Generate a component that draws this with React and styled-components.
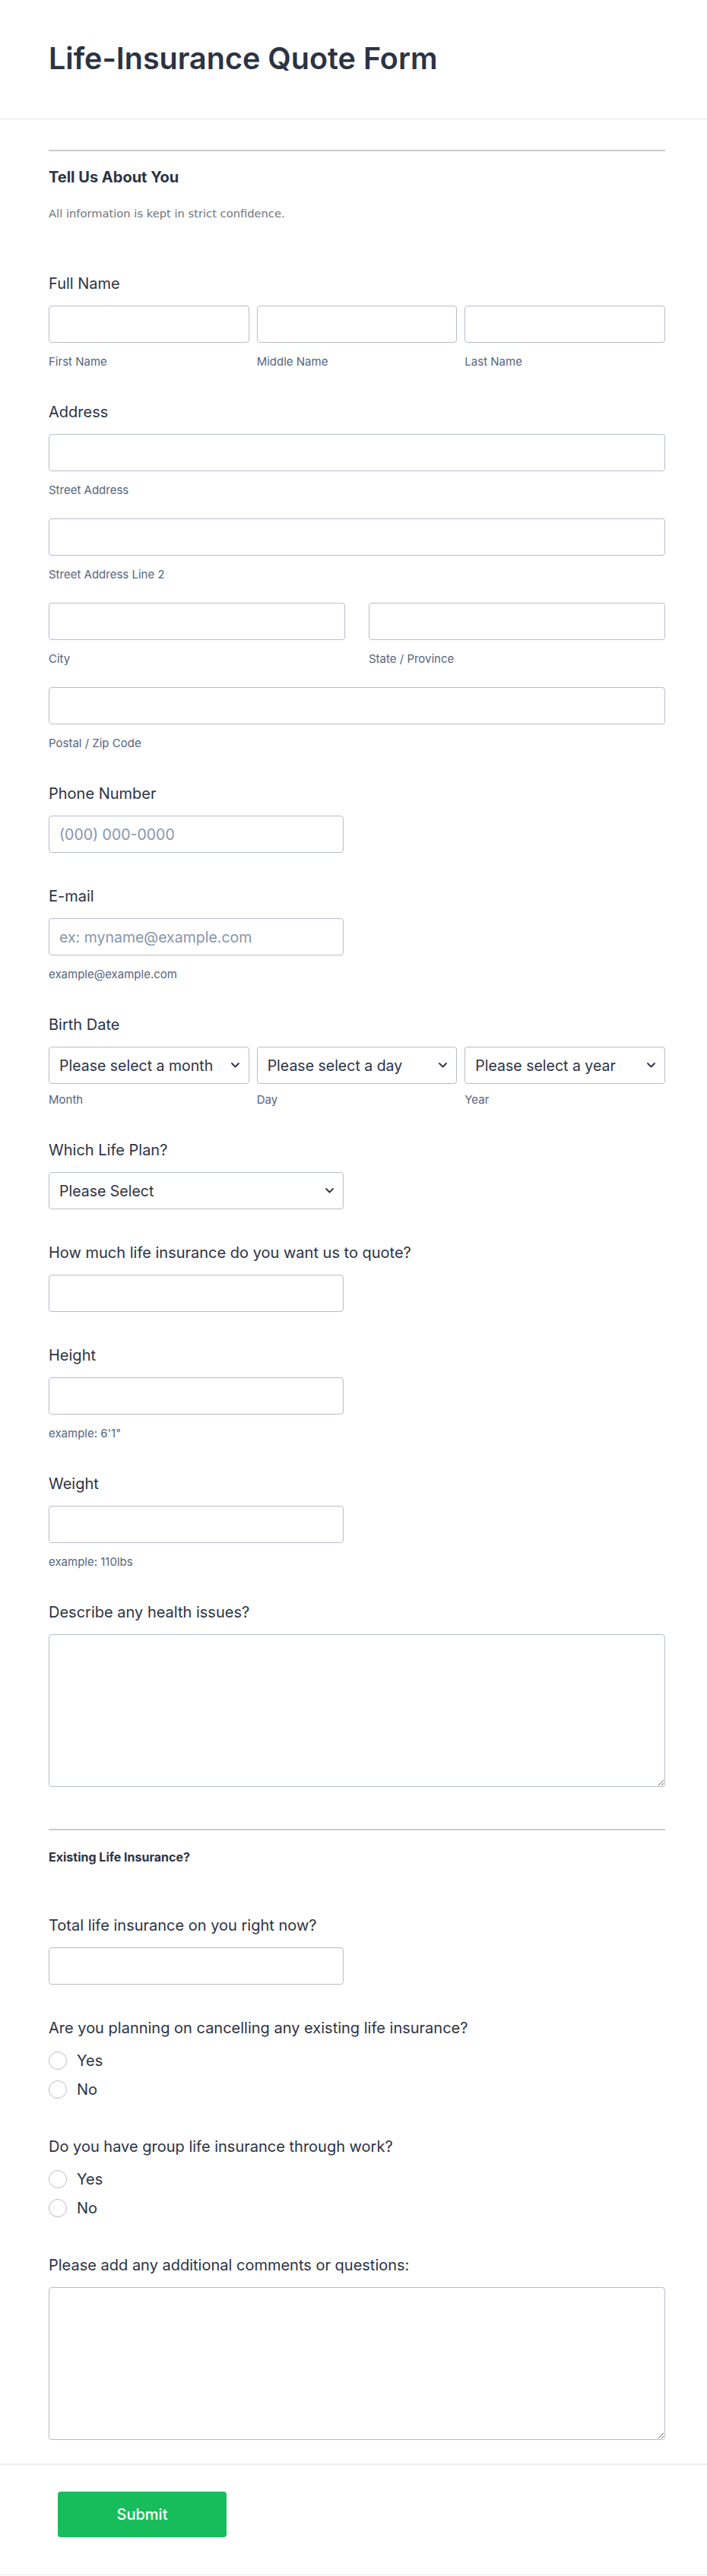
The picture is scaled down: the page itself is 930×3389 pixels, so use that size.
import React from 'react';
import styled, { createGlobalStyle } from 'styled-components';

const GlobalStyle = createGlobalStyle`
  html, body { margin: 0; padding: 0; background: #ffffff; }
  body { font-family: Inter, "Noto Sans", sans-serif; color: #2c3345; }
  *, *::before, *::after { box-sizing: border-box; }
  input::placeholder, textarea::placeholder { color: #8894ab; opacity: 1; }
`;

const Page = styled.div`
  width: 930px;
  display: flex;
  flex-direction: column;
  background: #ffffff;
`;

const Header = styled.header`
  padding: 55px 55px 57px 64px;
  border-bottom: 1px solid #e3e5ea;
`;

const Title = styled.h1`
  margin: 0;
  font-size: 39.5px;
  line-height: 44px;
  font-weight: 600;
  color: #2c3345;
`;

const Main = styled.main`
  padding: 40px 55px 31px 64px;
  display: flex;
  flex-direction: column;
  gap: 55px;
`;

const Section = styled.section`
  display: flex;
  flex-direction: column;
  gap: 45px;
`;

const SectionHead = styled.div`
  border-top: 2px solid #c9cbcf;
  padding-bottom: ${(p) => p.$pb}px;
`;

const SectionTitle = styled.h2`
  margin: ${(p) => (p.$small ? 24 : 22)}px 0 0;
  font-size: ${(p) => (p.$small ? 16 : 20)}px;
  line-height: ${(p) => (p.$small ? 22 : 24)}px;
  font-weight: 700;
  color: #2c3345;
`;

const SectionSub = styled.p`
  margin: 27px 0 0;
  font-family: "DejaVu Sans", "Noto Sans", sans-serif;
  font-size: 14.7px;
  line-height: 18px;
  color: #6f7380;
`;

const Field = styled.div`
  display: flex;
  flex-direction: column;
  padding-bottom: ${(p) => p.$pb || 0}px;
`;

const Label = styled.label`
  font-size: 20px;
  line-height: 24px;
  font-weight: 400;
  color: #2c3345;
  margin-bottom: ${(p) => p.$mb || 17}px;
`;

const Row = styled.div`
  display: grid;
  grid-template-columns: ${(p) => p.$cols};
  column-gap: ${(p) => p.$gap}px;
`;

const Stack = styled.div`
  display: flex;
  flex-direction: column;
  gap: 28px;
`;

const Sub = styled.div`
  display: flex;
  flex-direction: column;
  min-width: 0;
`;

const SubLabel = styled.span`
  margin-top: ${(p) => (p.$tight ? 12 : 16)}px;
  font-size: 15px;
  line-height: 18px;
  color: #57647e;
`;

const TextInput = styled.input`
  display: block;
  width: ${(p) => (p.$half ? '388px' : '100%')};
  height: 49px;
  padding: 0 13px;
  border: 1px solid #b8bdc9;
  border-radius: 4px;
  background: #ffffff;
  font-family: Inter, sans-serif;
  font-size: 19.5px;
  color: #2c3345;
  outline: none;
`;

const TextArea = styled.textarea`
  display: block;
  width: 100%;
  height: 201px;
  padding: 10px 13px;
  border: 1px solid #b8bdc9;
  border-radius: 4px;
  background: #ffffff;
  font-family: Inter, sans-serif;
  font-size: 19.5px;
  color: #2c3345;
  resize: vertical;
  outline: none;
`;

const SelectWrap = styled.div`
  position: relative;
  width: ${(p) => (p.$half ? '388px' : '100%')};
`;

const Select = styled.select`
  display: block;
  width: 100%;
  height: 49px;
  padding: 0 34px 0 13px;
  border: 1px solid #b8bdc9;
  border-radius: 4px;
  background: #ffffff;
  font-family: Inter, sans-serif;
  font-size: 19.5px;
  color: #2c3345;
  appearance: none;
  -webkit-appearance: none;
  outline: none;
`;

const Chevron = styled.svg`
  position: absolute;
  right: 13px;
  top: 21px;
  pointer-events: none;
`;

const Options = styled.div`
  display: flex;
  flex-direction: column;
  gap: 14px;
`;

const Option = styled.label`
  display: flex;
  align-items: center;
  gap: 13px;
  height: 24px;
  font-size: 20px;
  color: #2c3345;
`;

const Radio = styled.span`
  width: 24px;
  height: 24px;
  border-radius: 50%;
  border: 1.5px solid #b8bdc9;
  background: #ffffff;
  flex-shrink: 0;
`;

const Footer = styled.footer`
  border-top: 2px solid #eceef2;
  border-bottom: 1px solid #eceef2;
  background: #ffffff;
  padding: 35px 0 49px 76px;
`;

const SubmitButton = styled.button`
  width: 222px;
  height: 60px;
  border: none;
  border-radius: 4px;
  background: #18bd5b;
  color: #ffffff;
  font-family: Inter, sans-serif;
  font-size: 20px;
  font-weight: 500;
  cursor: pointer;
`;

const ChevronIcon = () => (
  <Chevron width="11" height="7" viewBox="0 0 11 7" fill="none">
    <path d="M1 1l4.5 4.5L10 1" stroke="#2c3345" strokeWidth="1.8" strokeLinecap="round" strokeLinejoin="round" />
  </Chevron>
);

const Dropdown = ({ text, half }) => (
  <SelectWrap $half={half}>
    <Select defaultValue="">
      <option value="">{text}</option>
    </Select>
    <ChevronIcon />
  </SelectWrap>
);

const SimpleField = ({ label, placeholder, sub }) => (
  <Field>
    <Label>{label}</Label>
    <TextInput $half placeholder={placeholder} />
    {sub && <SubLabel>{sub}</SubLabel>}
  </Field>
);

const RadioField = ({ label }) => (
  <Field $pb={6}>
    <Label $mb={19}>{label}</Label>
    <Options>
      <Option><Radio />Yes</Option>
      <Option><Radio />No</Option>
    </Options>
  </Field>
);

export default function App() {
  return (
    <Page>
      <GlobalStyle />
      <Header>
        <Title>Life-Insurance Quote Form</Title>
      </Header>
      <Main>
        <Section>
          <SectionHead $pb={26}>
            <SectionTitle>Tell Us About You</SectionTitle>
            <SectionSub>All information is kept in strict confidence.</SectionSub>
          </SectionHead>

          <Field>
            <Label>Full Name</Label>
            <Row $cols="1fr 1fr 1fr" $gap={10}>
              <Sub><TextInput /><SubLabel>First Name</SubLabel></Sub>
              <Sub><TextInput /><SubLabel>Middle Name</SubLabel></Sub>
              <Sub><TextInput /><SubLabel>Last Name</SubLabel></Sub>
            </Row>
          </Field>

          <Field>
            <Label>Address</Label>
            <Stack>
              <Sub><TextInput /><SubLabel>Street Address</SubLabel></Sub>
              <Sub><TextInput /><SubLabel>Street Address Line 2</SubLabel></Sub>
              <Row $cols="1fr 1fr" $gap={31}>
                <Sub><TextInput /><SubLabel>City</SubLabel></Sub>
                <Sub><TextInput /><SubLabel>State / Province</SubLabel></Sub>
              </Row>
              <Sub><TextInput /><SubLabel>Postal / Zip Code</SubLabel></Sub>
            </Stack>
          </Field>

          <SimpleField label="Phone Number" placeholder="(000) 000-0000" />
          <SimpleField label="E-mail" placeholder="ex: myname@example.com" sub="example@example.com" />

          <Field>
            <Label>Birth Date</Label>
            <Row $cols="1fr 1fr 1fr" $gap={10}>
              <Sub><Dropdown text="Please select a month" /><SubLabel $tight>Month</SubLabel></Sub>
              <Sub><Dropdown text="Please select a day" /><SubLabel $tight>Day</SubLabel></Sub>
              <Sub><Dropdown text="Please select a year" /><SubLabel $tight>Year</SubLabel></Sub>
            </Row>
          </Field>

          <Field>
            <Label>Which Life Plan?</Label>
            <Dropdown text="Please Select" half />
          </Field>

          <SimpleField label="How much life insurance do you want us to quote?" />
          <SimpleField label="Height" sub={'example: 6\'1"'} />
          <SimpleField label="Weight" sub="example: 110lbs" />

          <Field>
            <Label>Describe any health issues?</Label>
            <TextArea />
          </Field>
        </Section>

        <Section>
          <SectionHead $pb={22}>
            <SectionTitle $small>Existing Life Insurance?</SectionTitle>
          </SectionHead>
          <SimpleField label="Total life insurance on you right now?" />
          <RadioField label="Are you planning on cancelling any existing life insurance?" />
          <RadioField label="Do you have group life insurance through work?" />
          <Field>
            <Label>Please add any additional comments or questions:</Label>
            <TextArea />
          </Field>
        </Section>
      </Main>
      <Footer>
        <SubmitButton type="button">Submit</SubmitButton>
      </Footer>
    </Page>
  );
}
